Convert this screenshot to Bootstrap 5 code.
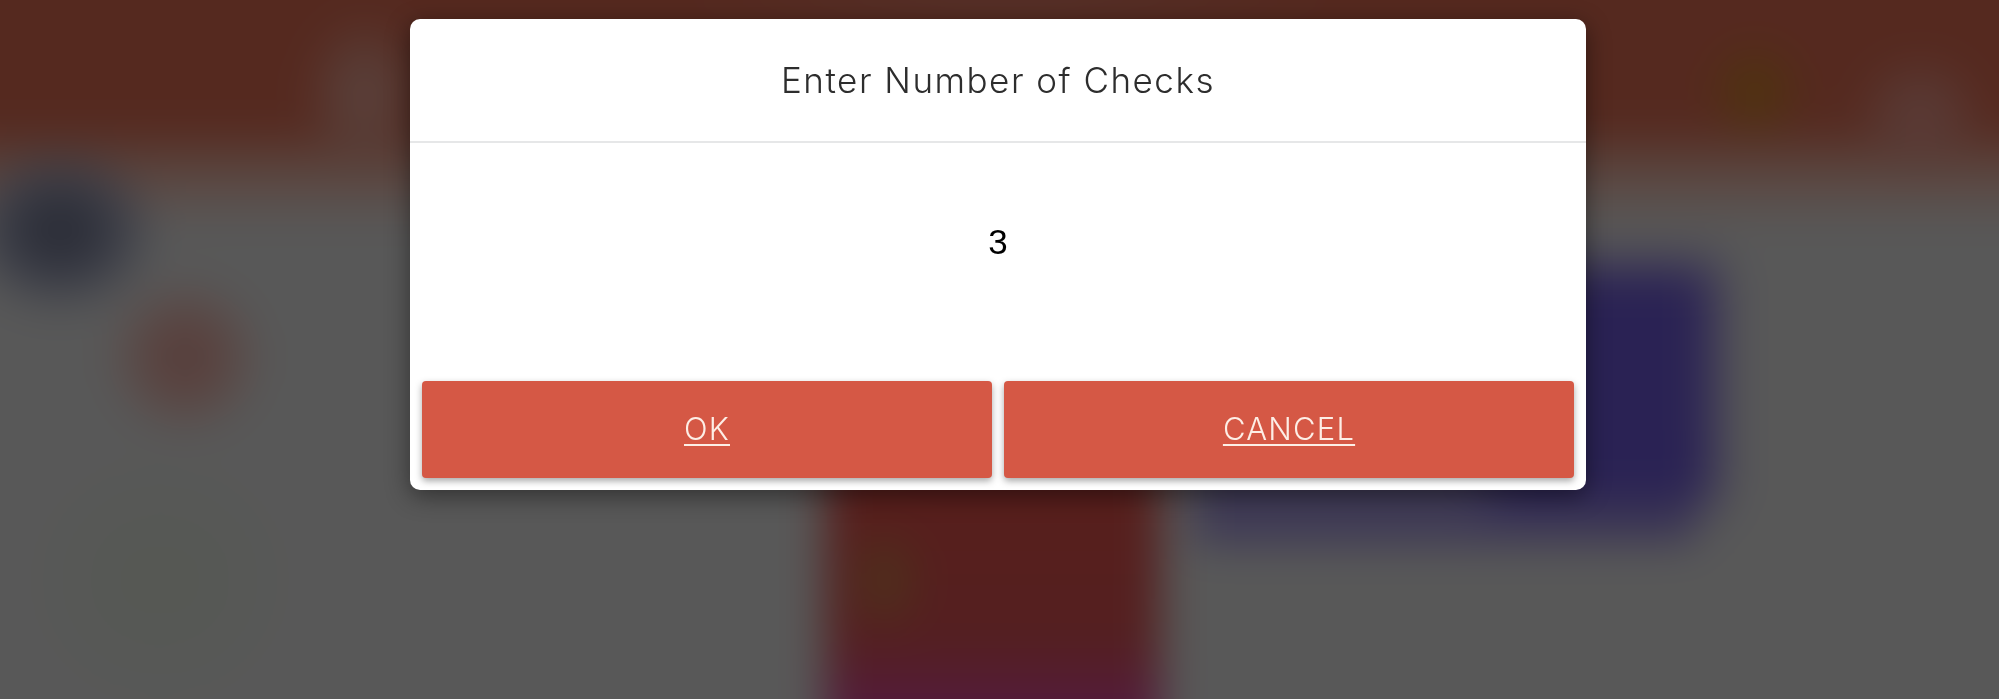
<!DOCTYPE html>
<html lang="en">
<head>
<meta charset="utf-8">
<title>Enter Number of Checks</title>
<link href="https://cdn.jsdelivr.net/npm/bootstrap@5.3.0/dist/css/bootstrap.min.css" rel="stylesheet">
<style>
html,body{height:100%;margin:0;overflow:hidden;background:#585858}
.scene{position:fixed;left:-100px;top:-100px;width:2199px;height:899px;overflow:hidden;background:#585858;filter:blur(20px)}
.blob{position:absolute}
.b-green{left:120px;top:540px;width:280px;height:280px;background:radial-gradient(closest-side,#555853,#585858)}
.b-top{left:0;top:0;width:2199px;height:330px;background:linear-gradient(#55291f 0,#55291f 225px,#594039 262px,#5b4a45 285px,#585858 325px)}
.b-gap{left:400px;top:110px;width:130px;height:170px;background:radial-gradient(closest-side,#593f39 30%,rgba(88,58,50,0))}
.b-gap2{left:760px;top:70px;width:700px;height:50px;background:radial-gradient(closest-side,#563630,rgba(86,54,48,0))}
.b-gap3{left:1950px;top:150px;width:140px;height:130px;background:radial-gradient(closest-side,#593a35 30%,rgba(90,58,53,0))}
.b-olive{left:1805px;top:140px;width:100px;height:100px;background:radial-gradient(closest-side,#4f3210 35%,rgba(85,41,31,0))}
.b-navy{left:60px;top:245px;width:200px;height:170px;background:radial-gradient(closest-side,#2c2e38 25%,#3c3e48 60%,rgba(88,88,88,0))}
.b-ring{left:205px;top:377px;width:160px;height:160px;background:radial-gradient(closest-side,#563b38,#5a4744 55%,rgba(88,88,88,0))}
.b-sub{left:1295px;top:530px;width:500px;height:115px;background:#3f3a55}
.b-blue{left:1590px;top:365px;width:225px;height:240px;background:#2a2254;filter:blur(14px)}
.b-red{left:926px;top:540px;width:334px;height:400px;background:linear-gradient(#581e1a 0,#541f20 50%,#531b40 70%,#531b42 100%);filter:blur(8px)}
.b-redl{left:945px;top:620px;width:80px;height:120px;background:radial-gradient(closest-side,#4e301c 25%,rgba(80,48,28,0))}
.dlg-wrap{position:relative;z-index:2;padding:19px 0 0 410px}
.dlg{width:1176px;height:471px;background:#fff;border-radius:10px;box-shadow:0 6px 24px rgba(0,0,0,.45);display:flex;flex-direction:column}
.dlg-head{height:124px;border-bottom:2px solid #e6e7e8;font-family:Inter,"Liberation Sans",sans-serif;font-weight:300;font-size:35px;letter-spacing:1.5px;color:#2d2d2d}
.dlg-val{height:238px;font-family:"Liberation Sans",Arial,sans-serif;font-size:35px;color:#000;padding-bottom:40px}
.dlg-foot{padding:0 12px 12px;gap:12px}
.act{flex:1 1 0;height:97px;border:0;border-radius:4px;background:#d55845;color:#fdeee6;font-family:Inter,"Liberation Sans",sans-serif;font-weight:300;font-size:31px;letter-spacing:1.2px;text-decoration:underline;text-decoration-thickness:2px;text-underline-offset:4px;box-shadow:0 3px 7px rgba(0,0,0,.35)}
</style>
</head>
<body>
<div class="scene" aria-hidden="true">
<div class="blob b-green"></div>
<div class="blob b-top"></div><div class="blob b-gap"></div><div class="blob b-gap2"></div><div class="blob b-gap3"></div><div class="blob b-olive"></div>
<div class="blob b-navy"></div><div class="blob b-ring"></div><div class="blob b-sub"></div><div class="blob b-blue"></div>
<div class="blob b-red"></div><div class="blob b-redl"></div>
</div>
<div class="dlg-wrap">
<div class="dlg">
<div class="dlg-head d-flex align-items-center justify-content-center">Enter Number of Checks</div>
<div class="dlg-val d-flex align-items-center justify-content-center">3</div>
<div class="dlg-foot d-flex">
<button type="button" class="act">OK</button>
<button type="button" class="act">CANCEL</button>
</div>
</div>
</div>
</body>
</html>
